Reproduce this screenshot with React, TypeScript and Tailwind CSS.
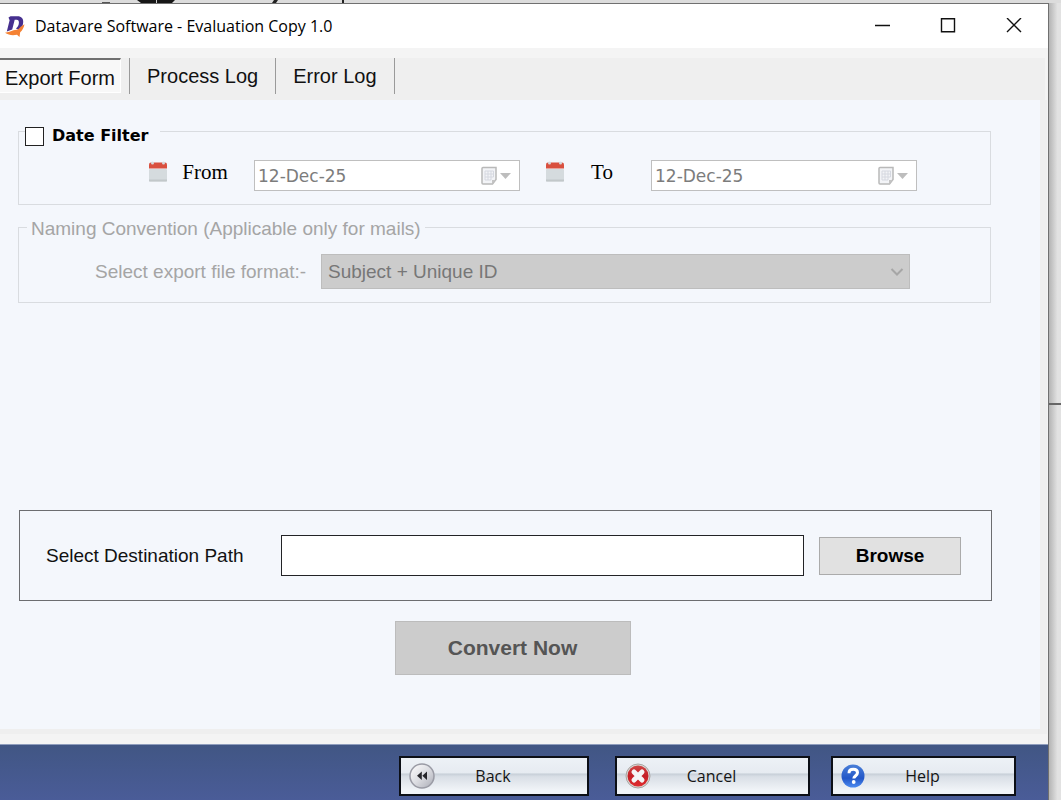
import type { ReactNode } from "react";

function BrandIcon() {
  return (
    <svg viewBox="0 0 20 21" className="h-[21px] w-5 shrink-0" aria-hidden="true">
      <path
        fillRule="evenodd"
        fill="#46308f"
        d="M3.500 1.500 5.500.3h7c4 0 6 2.500 5.700 6-.3 3.500-1.500 6.200-3.700 8.200L11 12.500c1.800-1.500 2.800-3.500 2.900-5.800.1-1.900-.7-2.900-2.200-2.900H9.700L7.200 13.500 1.800 15.500 4.600 4.200z"
      />
      <path
        fill="#f58233"
        d="M0 16.800c3-.6 6-1.300 8.500-2.500l4.500-.8 3-3 3.500-2.300c-.8 3.500-2 6-4.300 8L14.500 21 12 18.800c-4 .8-8.500.6-12-2z"
      />
    </svg>
  );
}

function CalendarIcon() {
  return (
    <svg viewBox="0 0 20 22" className="h-[22px] w-5 shrink-0" aria-hidden="true">
      <rect x="1" y="9" width="18" height="12.500" rx="1" fill="#d5dbde" />
      <path d="M1 19.500h18v1.500q0 .5-1 .5H2q-1 0-1-.5z" fill="#c2c8ca" />
      <path d="M1 8.500V4.500q0-2 2-2h14q2 0 2 2v4z" fill="#d9503f" />
      <circle cx="4.500" cy="3" r="1.500" fill="#d5dbde" />
      <circle cx="15.500" cy="3" r="1.500" fill="#d5dbde" />
    </svg>
  );
}

function PickerIcon() {
  return (
    <svg viewBox="0 0 30 20" className="h-5 w-[30px] shrink-0" aria-hidden="true">
      <path d="M2 1.500h13v12L11.500 18H2q-1 0-1-1V2.500q0-1 1-1z" fill="#f3f4f7" stroke="#b9b9b9" strokeWidth="1.500" />
      <path d="M4 5h8.500M4 8h8.500M4 11h8.500M4 14h6M4 5v9M7 5v9M10 5v9M12.500 5v6" fill="none" stroke="#d5d8e0" />
      <path d="M11 18v-4h4z" fill="#c4c4c4" />
      <path d="M19 7h11l-5.500 6z" fill="#bdbdbd" />
    </svg>
  );
}

function RewindIcon() {
  return (
    <svg viewBox="0 0 26 26" className="size-[26px]" aria-hidden="true">
      <defs>
        <linearGradient id="silver" x1="0" y1="0" x2="1" y2="1">
          <stop offset="0" stopColor="#ffffff" />
          <stop offset="0.500" stopColor="#dcdde2" />
          <stop offset="1" stopColor="#a9abb5" />
        </linearGradient>
      </defs>
      <circle cx="13" cy="13" r="12" fill="url(#silver)" stroke="#9a9ba5" strokeWidth="1.500" />
      <path d="M12.800 8.500v8.500L8 12.700zM18 8.500v8.500l-4.700-4.300z" fill="#26262b" />
    </svg>
  );
}

function CancelIcon() {
  return (
    <svg viewBox="0 0 26 26" className="size-[26px]" aria-hidden="true">
      <defs>
        <linearGradient id="red" x1="0" y1="0" x2="0" y2="1">
          <stop offset="0" stopColor="#cf4545" />
          <stop offset="0.500" stopColor="#c41f25" />
          <stop offset="1" stopColor="#e02c30" />
        </linearGradient>
      </defs>
      <circle cx="13" cy="13" r="12" fill="#d9d5d2" stroke="#a9a5a3" />
      <circle cx="13" cy="13" r="10.500" fill="url(#red)" />
      <path d="m9 9 8 8m0-8-8 8" stroke="#f5f5f5" strokeWidth="5" strokeLinecap="round" />
    </svg>
  );
}

function HelpIcon() {
  return (
    <svg viewBox="0 0 26 26" className="size-[26px]" aria-hidden="true">
      <defs>
        <linearGradient id="blue" x1="0" y1="0" x2="0" y2="1">
          <stop offset="0" stopColor="#4a7fd8" />
          <stop offset="0.600" stopColor="#2357c8" />
          <stop offset="1" stopColor="#4c8af0" />
        </linearGradient>
      </defs>
      <circle cx="12" cy="13" r="11.500" fill="url(#blue)" />
      <path d="M8 10.200C8 7.800 9.800 6.300 12.300 6.300s4.200 1.400 4.200 3.500c0 2.800-3.700 3-3.700 5.700" fill="none" stroke="#fff" strokeWidth="3" />
      <circle cx="12.700" cy="19" r="1.900" fill="#fff" />
    </svg>
  );
}

function DateField({ id, label }: { id: string; label: string }) {
  return (
    <div className="flex min-w-0 flex-1 items-start">
      <CalendarIcon />
      <label
        htmlFor={id}
        className="mr-6 ml-3 w-[50px] shrink-0 text-center font-['Liberation_Serif',serif] text-[21px] leading-6 text-black"
      >
        {label}
      </label>
      <div className="flex h-[31px] min-w-0 flex-1 items-center border border-[#bfbfbf] bg-white pr-2 pl-[3px]">
        <input
          id={id}
          type="text"
          disabled
          defaultValue="12-Dec-25"
          className="min-w-0 flex-1 bg-transparent font-['DejaVu_Sans',sans-serif] text-[17px] leading-6 text-[#7c7c7c]"
        />
        <PickerIcon />
      </div>
    </div>
  );
}

function FooterButton({ icon, box, children }: { icon: ReactNode; box: string; children: ReactNode }) {
  return (
    <button
      type="button"
      className={`flex h-10 items-center border-2 border-[#0c0f16] bg-[linear-gradient(#edf1f6_0%,#e6ebf1_42%,#c6ced7_44%,#d9dfe6_52%,#f1f4f8_90%)] pl-2 ${box}`}
    >
      {icon}
      <span className="flex-1 pr-9 text-center font-['Open_Sans',sans-serif] text-[16px] leading-6 text-[#151515]">
        {children}
      </span>
    </button>
  );
}

function TitleBar() {
  return (
    <header className="flex h-11 items-center bg-white pr-[26px] pl-[5px]">
      <BrandIcon />
      <h1 className="ml-[10px] flex-1 font-['Open_Sans',sans-serif] text-[16px] leading-6 text-black">
        Datavare Software - Evaluation Copy 1.0
      </h1>
      <div className="flex gap-[50px]">
        <button type="button" aria-label="Minimize">
          <svg viewBox="0 0 16 16" className="size-4" aria-hidden="true">
            <path d="M1 7.500h15" stroke="#111" strokeWidth="1.500" />
          </svg>
        </button>
        <button type="button" aria-label="Maximize">
          <svg viewBox="0 0 16 16" className="size-4" aria-hidden="true">
            <path d="M1.500.7h13v13h-13z" fill="none" stroke="#111" strokeWidth="1.400" />
          </svg>
        </button>
        <button type="button" aria-label="Close">
          <svg viewBox="0 0 16 16" className="size-4" aria-hidden="true">
            <path d="m1 0 14 14M15 0 1 14" stroke="#111" strokeWidth="1.400" />
          </svg>
        </button>
      </div>
    </header>
  );
}

function Tabs() {
  return (
    <nav className="mr-[3px] flex h-[42px] items-start bg-[#efefef] text-[20px] leading-[36px] text-[#111]">
      <button
        type="button"
        className="h-[35px] border-t-2 border-r border-b border-t-[#6f6f6f] border-r-white border-b-white bg-[#f8f8f8] px-[5px]"
      >
        Export Form
      </button>
      <button type="button" className="ml-2 h-9 border-r border-l border-[#9a9a9a] px-[17px]">
        Process Log
      </button>
      <button type="button" className="h-9 border-r border-[#9a9a9a] px-[17px]">
        Error Log
      </button>
    </nav>
  );
}

function ExportForm() {
  return (
    <main className="mr-[7px] flex flex-1 flex-col bg-[#f4f7fc] pt-[17px] pr-[49px] pb-[53px] pl-[18px]">
      <fieldset className="min-w-0 border border-[#d9dce0] pr-[73px] pb-[13px] pl-[129px]">
        <legend className="-ml-[123px] pt-[9px] pr-3">
          <label className="flex items-center gap-2 font-['DejaVu_Sans',sans-serif] text-[16px] leading-5 font-bold text-black">
            <input type="checkbox" className="size-[19px] appearance-none border border-[#222] bg-white checked:bg-[#3c3c3c]" />
            Date Filter
          </label>
        </legend>
        <div className="mt-[14px] flex gap-[25px]">
          <DateField id="date-from" label="From" />
          <DateField id="date-to" label="To" />
        </div>
      </fieldset>

      <fieldset className="mt-2 min-w-0 border border-[#d9dce0] pr-20 pb-[13px] pl-[76px]">
        <legend className="-ml-[68px] px-1 pt-1 text-[19px] leading-6 text-[#a5a5a5]">
          Naming Convention (Applicable only for mails)
        </legend>
        <div className="mt-[13px] flex items-center">
          <label htmlFor="file-format" className="w-[226px] shrink-0 text-[19px] leading-6 text-[#a5a5a5]">
            Select export file format:-
          </label>
          <div className="grid min-w-0 flex-1 items-center">
            <select
              id="file-format"
              disabled
              className="col-start-1 row-start-1 h-[35px] w-full appearance-none border border-[#bdbdbd] bg-[#cccccc] pl-[6px] text-[19px] leading-6 text-[#777] opacity-100"
            >
              <option>Subject + Unique ID</option>
            </select>
            <svg
              viewBox="0 0 14 8"
              className="pointer-events-none col-start-1 row-start-1 mr-[6px] h-2 w-[14px] justify-self-end"
              aria-hidden="true"
            >
              <path d="m1.500 1 5.500 5.500L12.500 1" fill="none" stroke="#a6a6a6" strokeWidth="2" />
            </svg>
          </div>
        </div>
      </fieldset>

      <section className="mt-[207px] -mr-px ml-px flex h-[91px] items-center border border-[#6c6d70] pr-[30px] pl-[26px]">
        <label htmlFor="destination" className="w-[235px] shrink-0 text-[19px] leading-6 text-[#111]">
          Select Destination Path
        </label>
        <input
          id="destination"
          type="text"
          className="h-[41px] min-w-0 flex-1 border border-[#222326] bg-white px-2 text-[19px]"
        />
        <button
          type="button"
          className="ml-[15px] h-[38px] w-[142px] border border-[#ababab] bg-[#e1e1e1] text-[19px] leading-6 font-bold text-black"
        >
          Browse
        </button>
      </section>

      <button
        type="button"
        disabled
        className="mt-5 ml-4 h-[54px] w-[236px] self-center border border-[#bcbcbc] bg-[#cccccc] text-[21px] leading-6 font-bold text-[#555]"
      >
        Convert Now
      </button>
    </main>
  );
}

export default function App() {
  return (
    <div className="flex min-h-screen flex-col bg-[#dcdcdc] font-['Liberation_Sans',Arial,sans-serif]">
      <svg className="h-[3px] w-full" aria-hidden="true">
        <rect x="102" y="2" width="8" height="1" fill="#555" />
        <path d="M137 0h38l-3 3h-31z" fill="#161616" />
        <path d="M156 0h1v3h-1z" fill="#ccc" />
        <path d="M274 0h4l-2 3h-4zM342 0h2v3h-2z" fill="#222" />
      </svg>
      <div className="flex flex-1">
        <div className="flex min-w-0 flex-1 flex-col border-t border-r border-[#707070] bg-[#f4f4f4]">
          <TitleBar />
          <div className="mt-[10px] flex flex-1 flex-col">
            <Tabs />
            <div className="mr-px flex flex-1 flex-col bg-[#efefef] pb-[5px]">
              <ExportForm />
            </div>
          </div>
          <footer className="mt-[10px] flex h-14 items-start justify-end gap-[21px] border-t border-[#8f9dbd] bg-linear-to-b from-[#415684] to-[#4a5c98] pt-[11px] pr-8">
            <FooterButton icon={<RewindIcon />} box="mr-[5px] w-[190px]">
              Back
            </FooterButton>
            <FooterButton icon={<CancelIcon />} box="w-[195px]">
              Cancel
            </FooterButton>
            <FooterButton icon={<HelpIcon />} box="w-[185px]">
              Help
            </FooterButton>
          </footer>
        </div>
        <aside className="flex w-3 flex-col bg-linear-to-r from-[#b4b4b4] to-[#e2e2e2] to-70%" aria-hidden="true">
          <div className="h-[402px] border-b-2 border-[#666]" />
        </aside>
      </div>
    </div>
  );
}
